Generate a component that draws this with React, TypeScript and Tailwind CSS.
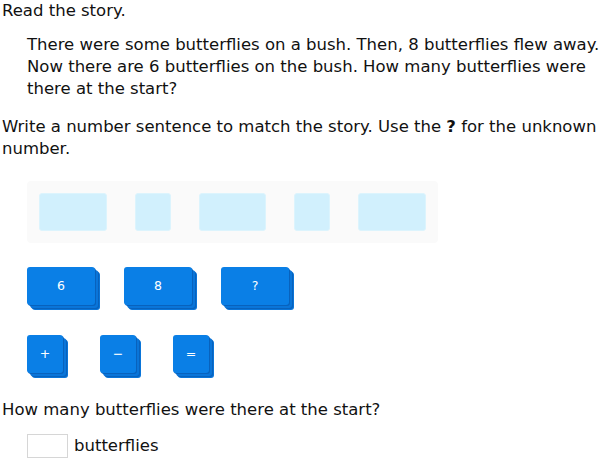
import React from 'react';

// Draggable-looking tile with a stacked card edge behind it.
const Tile: React.FC<{ label: string; wide?: boolean }> = ({ label, wide }) => (
  <div
    className={`flex items-center justify-center h-[38px] ${wide ? 'w-[68px]' : 'w-[36px]'} rounded-[3px] bg-[#0a7fe6] text-white text-[12.5px] shadow-[1px_1px_0_#0862bd,3px_3px_0_#0a75d9,4px_4px_0_#0862bd,5px_5px_0_#0a75d9]`}
  >
    {label}
  </div>
);

const Slot: React.FC<{ wide?: boolean }> = ({ wide }) => (
  <div className={`h-[38px] ${wide ? 'w-[68px]' : 'w-[36px]'} rounded-[3px] bg-[#d1f0fd] border border-[#dcf4fd]`} />
);

export default function App() {
  return (
    <div className="w-[600px] h-[458px] overflow-hidden bg-white text-[#111] text-[16.5px] leading-[22px] pl-[2px] font-['Verdana','DejaVu_Sans',sans-serif]">
      <p>Read the story.</p>
      <p className="mt-[12px] pl-[25px]">
        There were some butterflies on a bush. Then, 8 butterflies flew away. Now there are 6 butterflies on the bush. How many butterflies were there at the start?
      </p>
      <p className="mt-[16px]">
        Write a number sentence to match the story. Use the <b>?</b> for the unknown number.
      </p>

      <div className="mt-[21px] ml-[25px] w-[411px] h-[62px] rounded-[4px] bg-[#fafafa] flex items-center gap-[28px] px-[12px]">
        <Slot wide />
        <Slot />
        <Slot wide />
        <Slot />
        <Slot wide />
      </div>

      <div className="mt-[24px] ml-[25px] flex gap-[29px]">
        <Tile label="6" wide />
        <Tile label="8" wide />
        <Tile label="?" wide />
      </div>

      <div className="mt-[30px] ml-[25px] flex gap-[37px]">
        <Tile label="+" />
        <Tile label="−" />
        <Tile label="=" />
      </div>

      <p className="mt-[26px]">How many butterflies were there at the start?</p>
      <div className="mt-[13px] ml-[25px] flex items-center gap-[6px]">
        <div className="w-[41px] h-[24px] border border-[#d6d6d6] bg-white" />
        <span>butterflies</span>
      </div>
    </div>
  );
}
